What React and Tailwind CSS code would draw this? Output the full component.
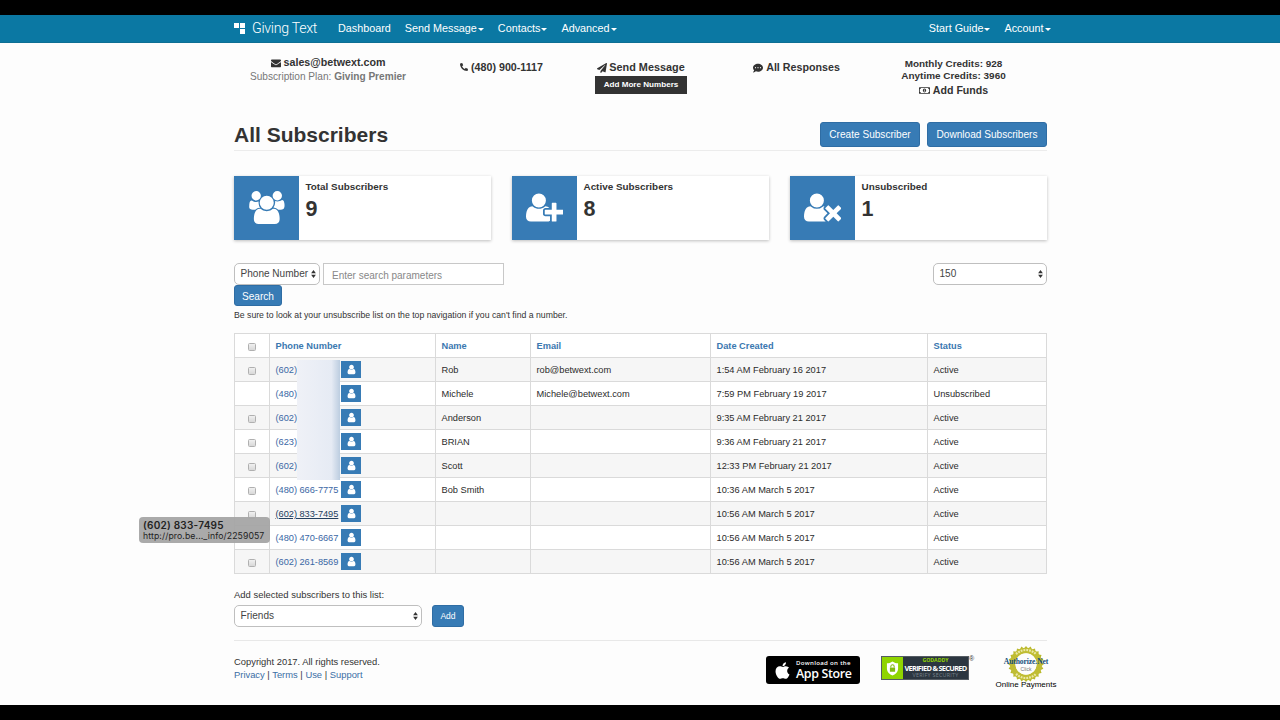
import React from "react";
import { FaPhoneAlt, FaPaperPlane, FaCommentDots, FaRegMoneyBillAlt, FaApple } from "react-icons/fa";

const USER =
  "M1536 1399q0 109-62.5 187t-150.5 78h-854q-88 0-150.5-78t-62.5-187q0-85 8.5-160.5t31.5-152 58.5-131 94-89 134.5-34.5q131 128 313 128t313-128q76 0 134.5 34.5t94 89 58.5 131 31.5 152 8.5 160.5zm-256-887q0 159-112.5 271.5t-271.5 112.5-271.5-112.5-112.5-271.5 112.5-271.5 271.5-112.5 271.5 112.5 112.5 271.5z";
const USERS =
  "M657 896q-162 5-265 128h-134q-82 0-138-40.5t-56-118.5q0-353 124-353 6 0 43.5 21t97.5 42.5 119 21.5q67 0 133-23-5 37-5 66 0 159 93 287zm1071 637q0 120-73 189.5t-194 69.5h-874q-121 0-194-69.5t-73-189.5q0-53 3.5-103.5t14-109 26.5-108.5 43-97.5 62-81 85.5-53.5 111.5-20q10 0 43 21.5t73 48 107 48 135 21.5 135-21.5 107-48 73-48 43-21.5q61 0 111.5 20t85.5 53.5 62 81 43 97.5 26.5 108.5 14 109 3.5 103.5zm-1024-1277q0 106-75 181t-181 75-181-75-75-181 75-181 181-75 181 75 75 181zm704 384q0 159-112.5 271.5t-271.5 112.5-271.5-112.5-112.5-271.5 112.5-271.5 271.5-112.5 271.5 112.5 112.5 271.5zm576 225q0 78-56 118.5t-138 40.5h-134q-103-123-265-128 93-128 93-287 0-29-5-66 66 23 133 23 59 0 119-21.5t97.5-42.5 43.5-21q124 0 124 353zm-128-609q0 106-75 181t-181 75-181-75-75-181 75-181 181-75 181 75 75 181z";
const USER_PLUS =
  "M704 896q-159 0-271.5-112.5t-112.5-271.5 112.5-271.5 271.5-112.5 271.5 112.5 112.5 271.5-112.5 271.5-271.5 112.5zm960 128h352q13 0 22.5 9.5t9.5 22.5v192q0 13-9.5 22.5t-22.5 9.5h-352v352q0 13-9.5 22.5t-22.5 9.5h-192q-13 0-22.5-9.5t-9.5-22.5v-352h-352q-13 0-22.5-9.5t-9.5-22.5v-192q0-13 9.5-22.5t22.5-9.5h352v-352q0-13 9.5-22.5t22.5-9.5h192q13 0 22.5 9.5t9.5 22.5v352zm-736 224q0 52 38 90t90 38h256v238q-68 50-171 50h-874q-121 0-194-69t-73-190q0-53 3.5-103.5t14-109 26.5-108.5 43-97.5 62-81 85.5-53.5 111.5-20q19 0 39 17 79 61 154.5 91.5t164.5 30.5 164.5-30.5 154.5-91.5q20-17 39-17 132 0 217 96h-223q-52 0-90 38t-38 90v192z";
const USER_TIMES =
  "M704 896q-159 0-271.5-112.5t-112.5-271.5 112.5-271.5 271.5-112.5 271.5 112.5 112.5 271.5-112.5 271.5-271.5 112.5zm1077 320l249 249q9 9 9 23 0 13-9 22l-136 136q-9 9-22 9-14 0-23-9l-249-249-249 249q-9 9-23 9-13 0-22-9l-136-136q-9-9-9-22 0-14 9-23l249-249-249-249q-9-9-9-23 0-13 9-22l136-136q9-9 22-9 14 0 23 9l249 249 249-249q9-9 23-9 13 0 22 9l136 136q9 9 9 22 0 14-9 23zm-498 0l-181 181q-37 37-37 91 0 53 37 90l83 83q-21 3-44 3h-874q-121 0-194-69t-73-190q0-53 3.5-103.5t14-109 26.5-108.5 43-97.5 62-81 85.5-53.5 111.5-20q19 0 39 17 154 122 319 122t319-122q20-17 39-17 28 0 57 6-28 27-41 50t-13 56q0 54 37 91z";
const ENVELOPE =
  "M1792 710v794q0 66-47 113t-113 47h-1472q-66 0-113-47t-47-113v-794q44 49 101 87 362 246 497 345 57 42 92.5 65.5t94.5 48 110 24.5h2q51 0 110-24.5t94.5-48 92.5-65.5q170-123 498-345 57-39 100-87zm0-294q0 79-49 151t-122 123q-376 261-468 325-10 7-42.5 31t-54 38.5-52 32.5-57.5 27-50 9h-2q-23 0-50-9t-57.5-27-52-32.5-54-38.5-42.5-31q-91-64-262-182.5t-205-142.5q-62-42-117-115.5t-55-136.5q0-78 41.5-130t118.5-52h1472q65 0 112.5 47t47.5 113z";

function Glyph({ d, wide, className }) {
  return (
    <svg viewBox={wide ? "0 0 2048 1792" : "0 0 1792 1792"} fill="currentColor" className={className}>
      <path d={d} />
    </svg>
  );
}

function NavItem({ children, caret }) {
  return (
    <a className="flex items-center whitespace-nowrap">
      {children}
      {caret && <span className="ml-[1px] mt-px border-x-[3px] border-t-[3px] border-x-transparent border-t-white" />}
    </a>
  );
}

function Arrows() {
  return (
    <svg viewBox="0 0 6 10" className="h-[8px] w-[5px] shrink-0" fill="#333">
      <path d="M3 0L6 4H0zM3 10L0 6h6z" />
    </svg>
  );
}

function Select({ children, className }) {
  return (
    <div className={`flex h-[22px] items-center justify-between rounded-[5px] border border-[#bfbfbf] bg-white pl-[5.5px] pr-[3px] text-[#444] ${className}`}>
      <span>{children}</span>
      <Arrows />
    </div>
  );
}

function Stat({ icon, label, value }) {
  return (
    <div className="flex h-16 w-[257px] bg-white shadow-[0_1px_3px_rgba(0,0,0,0.25)]">
      <div className="flex w-[64.5px] items-center justify-center bg-[#377bb5] pb-px text-white">{icon}</div>
      <div className="pl-[7px] pt-[4px] font-bold text-[#333]">
        <div className="text-[9.9px] leading-[13px]">{label}</div>
        <div className="mt-[3.5px] text-[21.5px] leading-[25px]">{value}</div>
      </div>
    </div>
  );
}

function Check() {
  return <span className="mt-[2px] block size-[8px] rounded-[1.5px] border border-[#b0b0b0] bg-linear-to-b from-[#f0f0f0] to-[#d8d8d8]" />;
}

const ROWS = [
  { check: true, phone: "(602)", name: "Rob", email: "rob@betwext.com", date: "1:54 AM February 16 2017", status: "Active" },
  { check: false, phone: "(480)", name: "Michele", email: "Michele@betwext.com", date: "7:59 PM February 19 2017", status: "Unsubscribed" },
  { check: true, phone: "(602)", name: "Anderson", email: "", date: "9:35 AM February 21 2017", status: "Active" },
  { check: true, phone: "(623)", name: "BRIAN", email: "", date: "9:36 AM February 21 2017", status: "Active" },
  { check: true, phone: "(602)", name: "Scott", email: "", date: "12:33 PM February 21 2017", status: "Active" },
  { check: true, phone: "(480) 666-7775", name: "Bob Smith", email: "", date: "10:36 AM March 5 2017", status: "Active" },
  { check: true, phone: "(602) 833-7495", name: "", email: "", date: "10:56 AM March 5 2017", status: "Active", hover: true },
  { check: false, phone: "(480) 470-6667", name: "", email: "", date: "10:56 AM March 5 2017", status: "Active" },
  { check: true, phone: "(602) 261-8569", name: "", email: "", date: "10:56 AM March 5 2017", status: "Active" },
];

const GRID = "grid h-6 grid-cols-[35px_166px_95px_180px_217px_119px]";
const CELL = "flex items-center border-b border-r border-[#dadada] pl-[5.5px] pt-px";

function Table() {
  return (
    <div className="relative mt-[11px] w-[813px] border-l border-t border-[#dadada] text-[9.25px] leading-[14px] text-[#2b2b2b]">
      <div className={`${GRID} bg-white font-bold text-[#3b78b0]`}>
        <div className="flex items-center justify-center border-b border-r border-[#dadada]"><Check /></div>
        {["Phone Number", "Name", "Email", "Date Created", "Status"].map((h) => (
          <div key={h} className={CELL}>{h}</div>
        ))}
      </div>
      {ROWS.map((r, i) => (
        <div key={i} className={`${GRID} ${i % 2 ? "bg-white" : "bg-[#f6f6f6]"}`}>
          <div className="flex items-center justify-center border-b border-r border-[#dadada]">{r.check && <Check />}</div>
          <div className={CELL}>
            <span className={`w-[65.5px] whitespace-nowrap tracking-[-0.03px] ${r.hover ? "text-[#23405f] underline" : "text-[#3b68a5]"}`}>{r.phone}</span>
            <span className="-mt-px flex h-[17px] w-5 items-center justify-center bg-[#377bb5] pb-px text-white">
              <Glyph d={USER} className="size-[11px]" />
            </span>
          </div>
          <div className={CELL}>{r.name}</div>
          <div className={CELL}>{r.email}</div>
          <div className={CELL}>{r.date}</div>
          <div className={CELL}>{r.status}</div>
        </div>
      ))}
      <div className="absolute left-[62px] top-[26px] h-[120px] w-[43px] bg-linear-to-r from-[#eff1f7] via-[#e6ebf4] via-80% to-[#bccde0]" />
      <div className="absolute left-[-96px] top-[183px] h-[26px] w-[131px] whitespace-nowrap rounded-[4px] bg-[#a5a5a5]/95 pl-[4px] pt-[2px] font-[Inter,sans-serif] text-[#222]">
        <div className="text-[10px] font-semibold leading-[12px] tracking-[0.25px]">(602) 833-7495</div>
        <div className="text-[8.7px] leading-[10px] tracking-[0.1px]">http://pro.be..._info/2259057</div>
      </div>
    </div>
  );
}

function Seal() {
  const teeth = Array.from({ length: 24 }, (_, i) => i * 15);
  return (
    <div className="relative flex h-[36px] w-[62px] items-center justify-center">
      <svg viewBox="-18 -18 36 36" className="size-[36px]">
        {teeth.map((a) => (
          <path key={a} d="M-2 -15.5L0 -18L2 -15.5z" fill="#b9b92c" transform={`rotate(${a})`} />
        ))}
        <circle r="13.4" fill="none" stroke="#c0bd34" strokeWidth="5.500" />
        <path d="M-9.900 -9.900A14 14 0 019.900 -9.900M-9.900 9.900A14 14 0 009.900 9.900" fill="none" stroke="#ebe8a8" strokeWidth="2.200" strokeDasharray="1.800 1" />
        <circle r="10.6" fill="#fdfdfd" />
      </svg>
      <span className="absolute left-0 top-[10px] w-full text-center font-['Liberation_Serif',serif] text-[7.6px] font-bold leading-[12px] tracking-[-0.1px] text-[#174f7a]">Authorize.Net</span>
      <span className="absolute left-0 top-[19px] w-full text-center text-[5px] leading-[8px] text-[#777]">Click</span>
    </div>
  );
}

export default function App() {
  return (
    <div className="flex h-[720px] w-[1280px] flex-col overflow-hidden bg-[#fdfdfd] font-['Liberation_Sans',Arial,sans-serif] text-[#333]">
      <div className="h-[15px] shrink-0 bg-black" />
      <nav className="flex h-7 shrink-0 items-center border-b border-[#0d6f94] bg-[#0b78a3] pl-[234px] pr-[229.5px] text-[10.8px] text-white">
        <svg viewBox="0 0 11 11" className="size-[11px]" fill="#fff">
          <path d="M0 0h5v5H0zM6 0h5v5H6zM6 6h5v5H6z" />
        </svg>
        <span className="ml-[7px] w-[66px] whitespace-nowrap font-[Roboto,sans-serif] text-[14.2px] font-light tracking-[-0.3px]">Giving Text</span>
        <div className="ml-[20px] flex gap-[14px]">
          <NavItem>Dashboard</NavItem>
          <NavItem caret>Send Message</NavItem>
          <NavItem caret>Contacts</NavItem>
          <NavItem caret>Advanced</NavItem>
        </div>
        <div className="ml-auto flex gap-[14px]">
          <NavItem caret>Start Guide</NavItem>
          <NavItem caret>Account</NavItem>
        </div>
      </nav>

      <div className="ml-[234px] flex w-[814px] grow flex-col">
        <header className="flex h-[72px] shrink-0 whitespace-nowrap text-[10.7px] font-bold">
          <div className="flex w-[188px] flex-col items-center pt-[12px]">
            <div className="flex items-center gap-[3px] leading-[15px]"><Glyph d={ENVELOPE} className="size-[10px]" />sales@betwext.com</div>
            <div className="text-[10.1px] font-normal leading-[14px] text-[#777]">Subscription Plan: <b>Giving Premier</b></div>
          </div>
          <div className="flex w-[159px] items-start justify-center gap-[3px] pt-[17px] leading-[15px]">
            <FaPhoneAlt className="mt-[3px] size-[8px]" />(480) 900-1117
          </div>
          <div className="flex w-[120px] flex-col items-center pt-[17px]">
            <div className="flex items-center gap-[2px] text-[10.85px] leading-[15px]"><FaPaperPlane className="size-[10px]" />Send Message</div>
            <div className="mt-px flex h-[18px] w-[92px] items-center justify-center bg-[#333] text-[8.1px] text-white">Add More Numbers</div>
          </div>
          <div className="flex w-[191px] items-start justify-center gap-[3px] pt-[17px] leading-[15px]">
            <FaCommentDots className="mt-[3px] size-[10px]" />All Responses
          </div>
          <div className="flex w-[123px] flex-col items-center pt-[15px] text-[9.95px] leading-[12px]">
            <div>Monthly Credits: 928</div>
            <div>Anytime Credits: 3960</div>
            <div className="mt-px flex items-center gap-[3px] text-[10.6px] leading-[15px]"><FaRegMoneyBillAlt className="size-[11px]" />Add Funds</div>
          </div>
        </header>

        <div className="flex h-[36px] w-[813px] shrink-0 items-start justify-between border-b border-[#ececec]">
          <h1 className="pt-[6.5px] text-[21px] font-bold leading-[26px]">All Subscribers</h1>
          <div className="flex gap-[7px] pt-[7px] text-[10.1px] text-white">
            <button className="h-[25px] w-[100px] rounded-[3px] border border-[#2f6da4] bg-[#377bb5] pt-px">Create Subscriber</button>
            <button className="h-[25px] w-[120px] whitespace-nowrap rounded-[3px] border border-[#2f6da4] bg-[#377bb5] pt-px">Download Subscribers</button>
          </div>
        </div>

        <div className="mt-[25px] flex shrink-0 gap-[21px]">
          <Stat label="Total Subscribers" value="9" icon={<Glyph wide d={USERS} className="h-[33px] w-[37.5px]" />} />
          <Stat label="Active Subscribers" value="8" icon={<Glyph wide d={USER_PLUS} className="h-[33px] w-[37.5px]" />} />
          <Stat label="Unsubscribed" value="1" icon={<Glyph wide d={USER_TIMES} className="h-[33px] w-[37.5px]" />} />
        </div>

        <div className="mt-[23px] flex w-[813px] shrink-0 text-[10.05px]">
          <Select className="w-[86px] whitespace-nowrap">Phone Number</Select>
          <div className="ml-[3px] flex h-[22px] w-[181px] items-center border border-[#c8c8c8] bg-white pl-[8px] pt-[2px] text-[10px] text-[#888]">Enter search parameters</div>
          <Select className="ml-auto w-[114px]">150</Select>
        </div>
        <button className="h-[21px] w-[48px] shrink-0 rounded-[3px] border border-[#2f6da4] bg-[#377bb5] text-[10.1px] leading-[21px] text-white">Search</button>
        <p className="mt-[3px] shrink-0 whitespace-nowrap text-[8.7px] leading-[13px]">Be sure to look at your unsubscribe list on the top navigation if you can't find a number.</p>

        <Table />

        <p className="mt-[14px] text-[9.45px] leading-[13px]">Add selected subscribers to this list:</p>
        <div className="mt-[4px] flex text-[10.05px]">
          <Select className="w-[188px] pb-px">Friends</Select>
          <button className="ml-[10px] h-[22px] w-[32px] rounded-[3px] border border-[#2f6da4] bg-[#377bb5] text-[8.5px] text-white">Add</button>
        </div>

        <footer className="mt-[13px] flex w-[813px] border-t border-[#e8e8e8]">
          <div className="w-[532px] pt-[14px] text-[9.4px] leading-[13px]">
            <div>Copyright 2017. All rights reserved.</div>
            <div><a className="text-[#3b6ea5]">Privacy</a> | <a className="text-[#3b6ea5]">Terms</a> | <a className="text-[#3b6ea5]">Use</a> | <a className="text-[#3b6ea5]">Support</a></div>
          </div>
          <div className="mt-[15px] flex h-[28px] w-[94px] shrink-0 items-center rounded-[3px] bg-black pl-[7px] text-white">
            <FaApple className="size-[19px]" />
            <div className="ml-[4px] whitespace-nowrap font-['Open_Sans',sans-serif]">
              <div className="text-[6.1px] font-semibold leading-[8px] tracking-[0.3px]">Download on the</div>
              <div className="text-[12.4px] font-semibold leading-[14px] tracking-[-0.35px]">App Store</div>
            </div>
          </div>
          <div className="ml-[21px] mt-[15px] flex h-[24px] w-[88px] shrink-0 border border-[#555c63] bg-[#2c3640] text-white">
            <div className="flex w-[21px] items-center justify-center bg-[#8fd400]">
              <svg viewBox="0 0 14 16" className="h-[15px] w-[13px]">
                <path d="M7 .5C9 2 11 2.400 13 2.400V8c0 4-3 6.500-6 7.500C4 14.500 1 12 1 8V2.400C3 2.400 5 2 7 .5z" fill="#fff" />
                <path d="M4.200 7h5.600v4.500H4.200z" fill="#7fba10" />
                <path d="M5.200 7V5.800a1.800 1.800 0 013.600 0V7" fill="none" stroke="#7fba10" strokeWidth="1.100" />
              </svg>
            </div>
            <div className="flex-1 whitespace-nowrap text-center font-['Open_Sans',sans-serif]">
              <div className="text-[5.2px] font-bold leading-[7px] text-[#8fd400]">GODADDY</div>
              <div className="text-[7.4px] font-bold leading-[8px] tracking-[-0.7px]">VERIFIED &amp; SECURED</div>
              <div className="text-[5.4px] leading-[7px] tracking-[0.25px] text-[#78828c]">VERIFY SECURITY</div>
            </div>
          </div>
          <span className="mt-[14px] text-[7px] leading-[8px]">®</span>
          <div className="-mr-[10px] ml-auto mt-[5px] flex w-[62px] shrink-0 flex-col items-center">
            <Seal />
            <div className="-mt-[2px] whitespace-nowrap text-[8px] leading-[10px] text-black">Online Payments</div>
          </div>
        </footer>
      </div>
      <div className="h-[15px] shrink-0 bg-black" />
    </div>
  );
}
